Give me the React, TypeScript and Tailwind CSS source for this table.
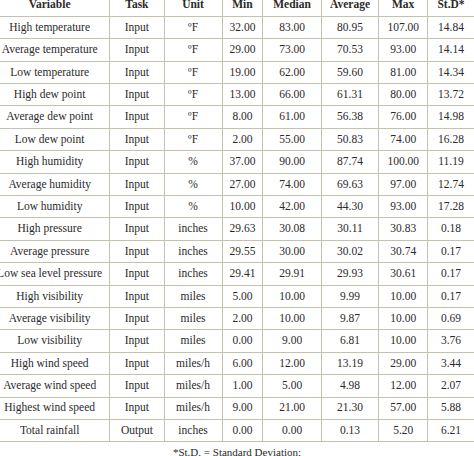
import React from "react";

const rows: string[][] = [
  ["High temperature", "Input", "ºF", "32.00", "83.00", "80.95", "107.00", "14.84"],
  ["Average temperature", "Input", "ºF", "29.00", "73.00", "70.53", "93.00", "14.14"],
  ["Low temperature", "Input", "ºF", "19.00", "62.00", "59.60", "81.00", "14.34"],
  ["High dew point", "Input", "ºF", "13.00", "66.00", "61.31", "80.00", "13.72"],
  ["Average dew point", "Input", "ºF", "8.00", "61.00", "56.38", "76.00", "14.98"],
  ["Low dew point", "Input", "ºF", "2.00", "55.00", "50.83", "74.00", "16.28"],
  ["High humidity", "Input", "%", "37.00", "90.00", "87.74", "100.00", "11.19"],
  ["Average humidity", "Input", "%", "27.00", "74.00", "69.63", "97.00", "12.74"],
  ["Low humidity", "Input", "%", "10.00", "42.00", "44.30", "93.00", "17.28"],
  ["High pressure", "Input", "inches", "29.63", "30.08", "30.11", "30.83", "0.18"],
  ["Average pressure", "Input", "inches", "29.55", "30.00", "30.02", "30.74", "0.17"],
  ["Low sea level pressure", "Input", "inches", "29.41", "29.91", "29.93", "30.61", "0.17"],
  ["High visibility", "Input", "miles", "5.00", "10.00", "9.99", "10.00", "0.17"],
  ["Average visibility", "Input", "miles", "2.00", "10.00", "9.87", "10.00", "0.69"],
  ["Low visibility", "Input", "miles", "0.00", "9.00", "6.81", "10.00", "3.76"],
  ["High wind speed", "Input", "miles/h", "6.00", "12.00", "13.19", "29.00", "3.44"],
  ["Average wind speed", "Input", "miles/h", "1.00", "5.00", "4.98", "12.00", "2.07"],
  ["Highest wind speed", "Input", "miles/h", "9.00", "21.00", "21.30", "57.00", "5.88"],
  ["Total rainfall", "Output", "inches", "0.00", "0.00", "0.13", "5.20", "6.21"],
];

const headers = ["Variable", "Task", "Unit", "Min", "Median", "Average", "Max", "St.D*"];
const widths = [121, 56, 60, 42, 60, 59, 50, 48];

export default function App() {
  return (
    <div
      className="w-[474px] h-[456px] overflow-hidden bg-white text-[#2a2a2a]"
      style={{ fontFamily: '"Liberation Serif", "Times New Roman", serif' }}
    >
      <table className="border-collapse table-fixed ml-[-10px] mt-[-6px] text-[11.5px] leading-none">
        <colgroup>
          {widths.map((w, i) => (
            <col key={i} style={{ width: w }} />
          ))}
        </colgroup>
        <thead>
          <tr className="h-[22.4px]">
            {headers.map((h, i) => (
              <th
                key={i}
                className="font-bold text-center border-b border-[#c2c2ae] border-l first:border-l-0 border-l-[#c2c2ae] p-0"
              >
                {h}
              </th>
            ))}
          </tr>
        </thead>
        <tbody>
          {rows.map((r, ri) => (
            <tr key={ri} className="h-[22.4px]">
              {r.map((c, ci) => (
                <td
                  key={ci}
                  className="text-center border-b border-[#c2c2ae] border-l first:border-l-0 border-l-[#c2c2ae] p-0 whitespace-nowrap"
                >
                  {c}
                </td>
              ))}
            </tr>
          ))}
        </tbody>
      </table>
      <div className="w-[474px] text-center text-[11px] mt-[2px]">*St.D. = Standard Deviation;</div>
    </div>
  );
}
